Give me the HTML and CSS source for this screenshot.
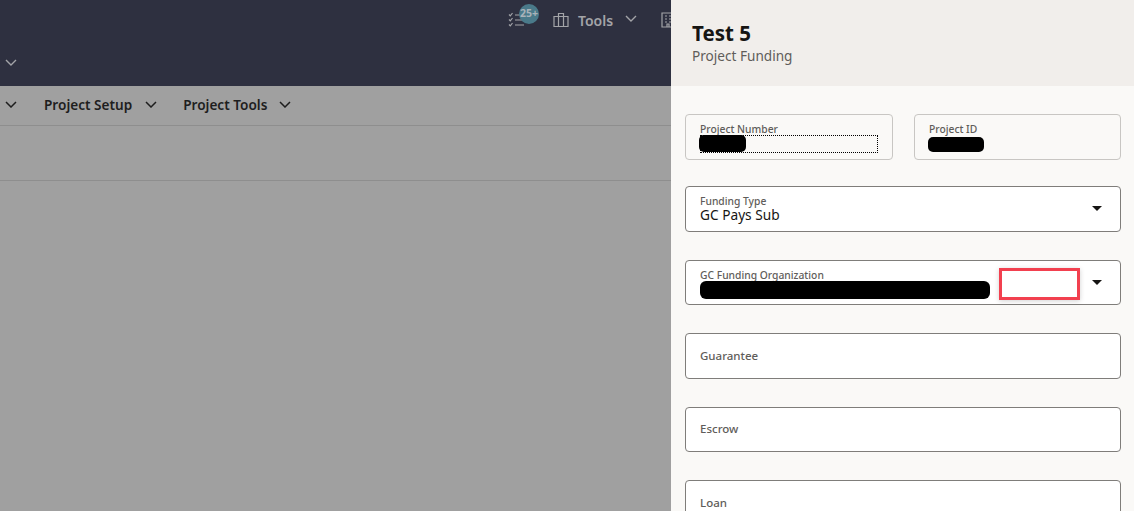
FILE: index.html
```html
<!DOCTYPE html>
<html lang="en">
<head>
<meta charset="utf-8">
<title>Project Funding</title>
<link rel="stylesheet" href="styles.css">
</head>
<body>
<div class="app">
  <main class="page">
    <header class="topbar">
      <div class="toolbar">
        <span class="tasks">
          <svg class="ic-tasks" viewBox="0 0 18 16" width="18" height="16" fill="none" stroke="#a3a4a8" stroke-width="1.2">
            <path d="M1 2.5l1.3 1.3L4.5 1M1 7.5l1.3 1.3L4.5 6M1 12.5l1.3 1.3L4.5 11"/>
            <path d="M7 3h9M7 8h9M7 13h9"/>
          </svg>
          <span class="badge">25+</span>
        </span>
        <svg class="ic-case" viewBox="0 0 16 16" width="16" height="16" fill="none" stroke="#a3a4a8" stroke-width="1.2">
          <path d="M1 4.5h14v10H1zM5.5 4.5V1.5h5v3M5.5 4.5v10M10.5 4.5v10"/>
        </svg>
        <span class="tools">Tools</span>
        <svg class="ic-chev-top" viewBox="0 0 12 7" width="12" height="7" fill="none" stroke="#a3a4a8" stroke-width="1.4"><path d="M1 1l5 5 5-5"/></svg>
        <svg class="ic-building" viewBox="0 0 14 16" width="14" height="16" fill="none" stroke="#a3a4a8" stroke-width="1.2">
          <path d="M1 15V1h12v14zM4 4h2M8 4h2M4 7h2M8 7h2M4 10h2M8 10h2M6 15v-3h2v3"/>
        </svg>
      </div>
      <div class="crumb">
        <svg viewBox="0 0 12 7" width="12" height="7" fill="none" stroke="#a3a4a8" stroke-width="1.4"><path d="M1 1l5 5 5-5"/></svg>
      </div>
    </header>
    <nav class="menu">
      <svg class="chev" viewBox="0 0 12 7" width="12" height="7" fill="none" stroke="#1e1e1e" stroke-width="1.5"><path d="M1 1l5 5 5-5"/></svg>
      <span class="menu-item">Project Setup</span>
      <svg class="chev" viewBox="0 0 12 7" width="12" height="7" fill="none" stroke="#1e1e1e" stroke-width="1.5"><path d="M1 1l5 5 5-5"/></svg>
      <span class="menu-item second">Project Tools</span>
      <svg class="chev" viewBox="0 0 12 7" width="12" height="7" fill="none" stroke="#1e1e1e" stroke-width="1.5"><path d="M1 1l5 5 5-5"/></svg>
    </nav>
    <div class="subbar"></div>
  </main>
  <aside class="drawer">
    <header class="drawer-head">
      <h1>Test 5</h1>
      <p>Project Funding</p>
    </header>
    <div class="form">
      <div class="pair">
        <div class="field readonly">
          <span class="label">Project Number</span>
          <div class="focus"><span class="redact r-num"></span></div>
        </div>
        <div class="field readonly">
          <span class="label">Project ID</span>
          <span class="redact r-id"></span>
        </div>
      </div>
      <div class="field select first-select">
        <span class="label">Funding Type</span>
        <span class="value">GC Pays Sub</span>
        <span class="caret"></span>
      </div>
      <div class="field select">
        <span class="label">GC Funding Organization</span>
        <span class="redact r-org"></span>
        <span class="caret"></span>
        <span class="highlight"></span>
      </div>
      <div class="field empty"><span class="label big">Guarantee</span></div>
      <div class="field empty"><span class="label big">Escrow</span></div>
      <div class="field empty"><span class="label big">Loan</span></div>
    </div>
  </aside>
</div>
</body>
</html>
```
FILE: styles.css
```css
* { box-sizing: border-box; }
html, body { margin: 0; height: 100%; overflow: hidden; }
body { font-family: "Noto Sans", "Open Sans", sans-serif; }

.app { display: flex; width: 1134px; height: 511px; overflow: hidden; }

.page { width: 671px; flex: none; background: #a0a0a0; overflow: hidden; }
.topbar { height: 86px; background: #2e3040; display: flex; flex-direction: column; }
.toolbar { display: flex; align-items: center; height: 40px; padding-left: 508px; white-space: nowrap; }
.tasks { position: relative; display: flex; width: 18px; height: 16px; }
.badge {
  position: absolute; left: 11px; top: -8px;
  width: 20px; height: 20px; border-radius: 50%;
  background: #4a7a8a; color: #a9b3ba;
  font-size: 10.5px; font-weight: 700; line-height: 18px; text-align: center;
}
.ic-tasks, .ic-case, .ic-building, .ic-chev-top { flex: none; }
.ic-case { margin-left: 27px; }
.tools { margin-left: 9px; color: #a3a4a8; font-size: 14px; font-weight: 600; }
.ic-chev-top { margin-left: 12px; margin-top: -3px; }
.ic-building { margin-left: 24px; }
.crumb { display: flex; padding: 19px 0 0 5px; }

.menu { height: 40px; border-bottom: 1px solid #8e8e8e; display: flex; align-items: center; padding: 0 0 2px 5px; }
.menu-item { font-size: 13.6px; font-weight: 600; color: #1e1e1e; white-space: nowrap; }
.menu .menu-item { margin-left: 27px; margin-right: 13px; }
.menu .menu-item.second { margin-left: 26px; margin-right: 12px; }
.chev { flex: none; }
.subbar { height: 55px; border-bottom: 1px solid #8e8e8e; }

.drawer { flex: 1; background: #faf9f7; display: flex; flex-direction: column; min-width: 0; }
.drawer-head { height: 86px; flex: none; background: #f1eeeb; padding: 19px 21px 0; }
.drawer-head h1 { margin: 0; font-size: 20.5px; line-height: 28px; font-weight: 700; color: #161513; }
.drawer-head p { margin: 0; font-size: 13.6px; line-height: 18px; color: #5f5d5a; }

.form { padding: 28px 13px 0 14px; display: flex; flex-direction: column; gap: 27.9px; }
.pair { display: flex; gap: 21px; }
.pair .field { flex: 1; }
.pair .field:first-child { flex: 0 0 208px; }
.first-select { margin-top: -1.5px; }

.field {
  position: relative; height: 45.6px; flex: none;
  background: #fff; border: 1px solid #7f7d7a; border-radius: 4px;
  padding: 8px 14px 0; display: flex; flex-direction: column; align-items: flex-start;
}
.field.readonly { background: transparent; border-color: #c8c6c3; height: 46px; }

.label { font-size: 10.3px; line-height: 13px; font-weight: 500; color: #5f5d5a; white-space: nowrap; }
.label.big { font-size: 11.5px; font-weight: 500; line-height: 16px; margin-top: 5.6px; }
.value { font-size: 13.7px; line-height: 13px; color: #161513; }

.focus { width: 178px; height: 18px; margin-top: -1px; border: 1px dotted #000; }
.redact { display: block; background: #000; border-radius: 5px; }
.r-num { width: 47px; height: 17px; margin-left: -2px; margin-top: -1px; }
.r-id { width: 56px; height: 15px; margin-left: -1px; margin-top: 1px; }
.r-org { width: 290px; height: 18px; margin-top: -1px; border-radius: 6px; }

.caret {
  position: absolute; right: 18px; top: 19px; width: 0; height: 0;
  border-left: 5px solid transparent; border-right: 5px solid transparent;
  border-top: 5px solid #161513;
}
.highlight {
  position: absolute; left: 313px; top: 7px; width: 81px; height: 32px;
  border: 3px solid #f2404f; box-shadow: 0 1px 5px rgba(0, 0, 0, 0.18);
}
```
